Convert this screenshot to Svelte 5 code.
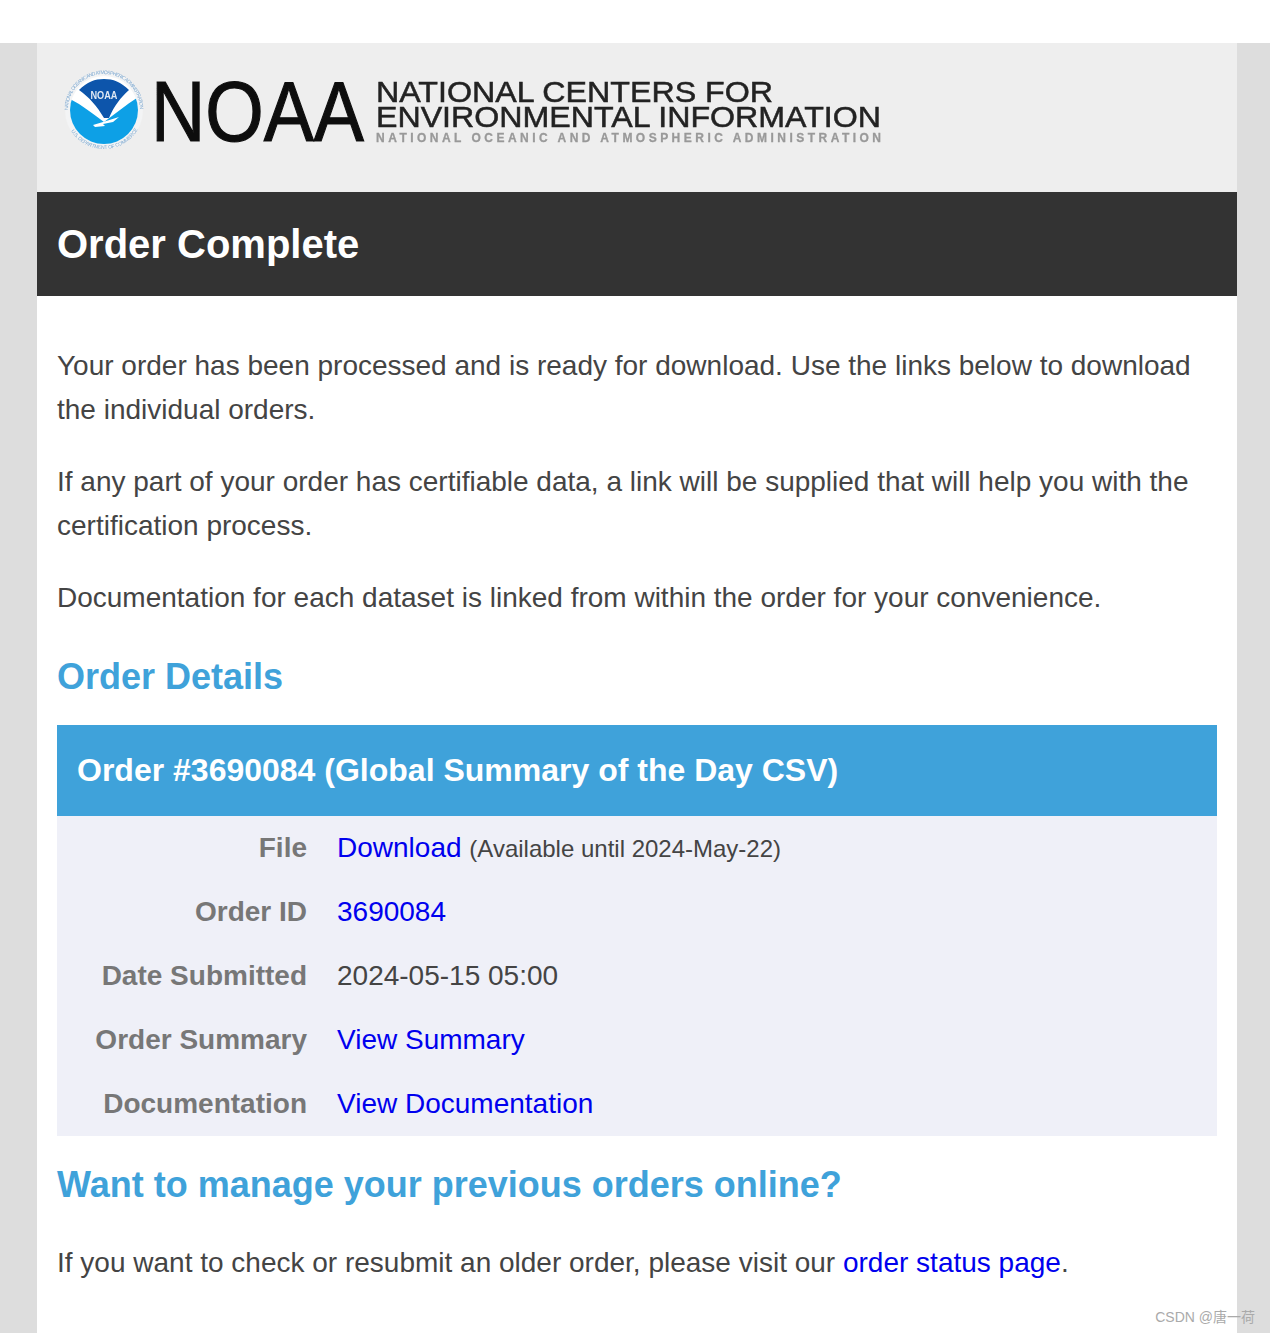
<script>
  const rows = [
    { label: 'File', links: [{ text: 'Download' }], note: '(Available until 2024-May-22)' },
    { label: 'Order ID', links: [{ text: '3690084' }] },
    { label: 'Date Submitted', plain: '2024-05-15 05:00' },
    { label: 'Order Summary', links: [{ text: 'View Summary' }] },
    { label: 'Documentation', links: [{ text: 'View Documentation' }] }
  ];
</script>

<div class="page">
  <div class="topbar"></div>
  <div class="backdrop">
    <main class="container">
      <header class="brand">
        <svg class="logo" width="830" height="90" viewBox="0 0 830 90" role="img" aria-label="NOAA National Centers for Environmental Information">
          <defs>
            <clipPath id="disc"><circle cx="47" cy="48" r="34" /></clipPath>
            <path id="ringtop" d="M11 48A36 36 0 0 1 83 48" />
            <path id="ringbot" d="M8 48A39 39 0 0 0 86 48" />
            <filter id="soft" x="-5%" y="-5%" width="110%" height="110%"><feGaussianBlur stdDeviation="0.75" /></filter>
          </defs>
          <g filter="url(#soft)">
            <circle cx="47" cy="48" r="39" fill="#f3f4f5" />
            <text class="ring"><textPath href="#ringtop" textLength="112">NATIONAL OCEANIC AND ATMOSPHERIC ADMINISTRATION</textPath></text>
            <text class="ring"><textPath href="#ringbot" startOffset="22" textLength="80">U.S. DEPARTMENT OF COMMERCE</textPath></text>
            <circle cx="47" cy="48" r="34" fill="#fff" />
            <g clip-path="url(#disc)">
              <path d="M11 36C24 42 36 52 47 60C58 52 70 42 83 34V84H11Z" fill="#0ea0e6" />
              <path d="M22 28C30 20 38 17 47 17C56 17 64 20 72 28C64 35 57 44 52 56L47 56C40 44 32 35 22 28Z" fill="#0a55ab" />
              <path d="M36 63L46 60L62 55L56 60L46 62L48 64L38 65Z" fill="#fff" />
            </g>
            <text x="47" y="37" class="noaa-small" text-anchor="middle" textLength="27" lengthAdjust="spacingAndGlyphs">NOAA</text>
            <text x="94" y="79" class="noaa" textLength="213" lengthAdjust="spacingAndGlyphs">NOAA</text>
            <text x="319" y="40" class="ncei" textLength="397" lengthAdjust="spacingAndGlyphs">NATIONAL CENTERS FOR</text>
            <text x="319" y="65" class="ncei" textLength="505" lengthAdjust="spacingAndGlyphs">ENVIRONMENTAL INFORMATION</text>
            <text x="319" y="80" class="nat" textLength="506" lengthAdjust="spacing">NATIONAL OCEANIC AND ATMOSPHERIC ADMINISTRATION</text>
          </g>
        </svg>
      </header>

      <div class="title"><h1>Order Complete</h1></div>

      <div class="content">
        <p>Your order has been processed and is ready for download. Use the links below to download the individual orders.</p>
        <p>If any part of your order has certifiable data, a link will be supplied that will help you with the certification process.</p>
        <p>Documentation for each dataset is linked from within the order for your convenience.</p>

        <h2 class="details">Order Details</h2>

        <section class="order">
          <h3>Order #3690084 (Global Summary of the Day CSV)</h3>
          <dl>
            {#each rows as row}
              <div class="row">
                <dt>{row.label}</dt>
                <dd>
                  {#if row.plain}{row.plain}{/if}
                  {#if row.links}{#each row.links as l}<a href="#top">{l.text}</a>{/each}{/if}
                  {#if row.note}<span class="note">{row.note}</span>{/if}
                </dd>
              </div>
            {/each}
          </dl>
        </section>

        <h2 class="manage">Want to manage your previous orders online?</h2>
        <p class="last">If you want to check or resubmit an older order, please visit our <a href="#top">order status page</a>.</p>
      </div>
    </main>
  </div>
  <div class="watermark">CSDN @唐一荷</div>
</div>

<style>
  :global(body) {
    margin: 0;
    background: #fff;
  }
  .page {
    position: relative;
    height: 1333px;
    overflow: hidden;
    font-family: "Liberation Sans", Arial, sans-serif;
    color: #444;
  }
  .topbar {
    height: 43px;
    background: #fff;
  }
  .backdrop {
    background: #ddd;
    height: 1290px;
    padding: 0 33px 0 37px;
  }
  .container {
    width: 1200px;
    height: 100%;
    background: #fff;
  }
  .brand {
    height: 149px;
    background: #eee;
  }
  .logo {
    display: block;
    padding: 19px 0 0 20px;
  }
  .ring {
    font: 5px "Liberation Sans", sans-serif;
    fill: #7fa9d0;
  }
  .noaa-small {
    font: bold 10px "Liberation Sans", sans-serif;
    fill: #dfe8f4;
  }
  .noaa {
    font: 86px "Liberation Sans", sans-serif;
    fill: #111;
    stroke: #111;
    stroke-width: 1.2px;
  }
  .ncei {
    font: 30px "Liberation Sans", sans-serif;
    fill: #222;
    stroke: #222;
    stroke-width: 0.5px;
  }
  .nat {
    font: bold 12px "Liberation Sans", sans-serif;
    letter-spacing: 1px;
    fill: #999;
    stroke: #999;
    stroke-width: 0.3px;
  }
  .title {
    height: 104px;
    background: #333;
    display: flex;
    align-items: center;
    padding-left: 20px;
  }
  h1 {
    margin: 0;
    color: #fff;
    font-size: 40px;
    font-weight: bold;
  }
  .content {
    padding: 48px 20px 0;
  }
  p {
    margin: 0 0 28px;
    font-size: 28px;
    line-height: 44px;
  }
  h2 {
    margin: 0;
    color: #3fa2da;
    font-size: 36px;
    line-height: 44px;
    font-weight: bold;
  }
  .details {
    margin-top: 35px;
  }
  .order {
    margin-top: 26px;
    background: #eff0f8;
  }
  h3 {
    margin: 0;
    height: 91px;
    display: flex;
    align-items: center;
    padding-left: 20px;
    background: #3fa2da;
    color: #fff;
    font-size: 32px;
    font-weight: bold;
  }
  dl {
    margin: 0;
  }
  .row {
    display: flex;
    align-items: baseline;
    height: 64px;
    padding-top: 16px;
    box-sizing: border-box;
    font-size: 28px;
  }
  dt {
    width: 250px;
    text-align: right;
    font-weight: bold;
    color: #777;
  }
  dd {
    margin: 0 0 0 30px;
  }
  a {
    color: #00e;
    text-decoration: none;
  }
  .note {
    font-size: 24px;
  }
  .manage {
    margin-top: 27px;
  }
  .last {
    margin-top: 34px;
  }
  .watermark {
    position: absolute;
    right: 15px;
    bottom: 7px;
    font: 14px "Liberation Sans", "Noto Sans CJK SC", sans-serif;
    color: #aaa;
  }
</style>
